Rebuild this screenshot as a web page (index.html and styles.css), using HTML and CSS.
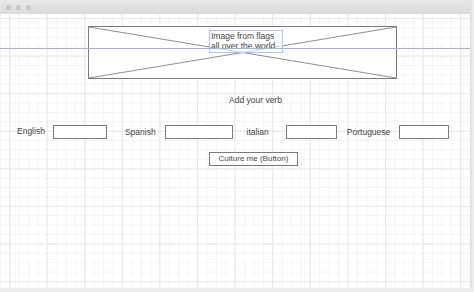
FILE: index.html
```html
<!DOCTYPE html>
<html lang="en">

<head>
    <meta charset="UTF-8">
    <title>Culture me - wireframe</title>
    <link rel="stylesheet" href="styles.css">
</head>

<body>

    <div class="frame">
        <div class="titlebar">
            <span class="dot"></span>
            <span class="dot"></span>
            <span class="dot"></span>
        </div>

        <div class="canvas">
            <div class="placeholder">
                <svg class="cross" viewBox="0 0 309 53" preserveAspectRatio="none">
                    <line x1="0" y1="0" x2="309" y2="53" />
                    <line x1="309" y1="0" x2="0" y2="53" />
                </svg>
                <div class="caption">Image from flags<br>all over the world</div>
            </div>

            <!-- selection guide from the mockup tool, lies over the image box -->
            <div class="guide"></div>

            <p class="heading">Add your verb</p>

            <div class="verbs">
                <label class="lang lang-en">English</label>
                <span class="field field-en"></span>
                <label class="lang lang-es">Spanish</label>
                <span class="field field-es"></span>
                <label class="lang lang-it">italian</label>
                <span class="field field-it"></span>
                <label class="lang lang-pt">Portuguese</label>
                <span class="field field-pt"></span>
            </div>

            <div class="actions">
                <button class="btn">Culture me (Button)</button>
            </div>
        </div>
    </div>

</body>

</html>
```

FILE: styles.css
```css
body {
    margin: 0;
    background-color: #ececec;
    font-family: "Liberation Sans", Arial, sans-serif;
    font-size: 8.5px;
    color: #444;
}

.frame {
    width: 470px;
    height: 288px;
    background-color: #fff;
    box-shadow: 0 0 3px rgba(0, 0, 0, 0.15);
    display: flex;
    flex-direction: column;
}

.titlebar {
    height: 14px;
    background: linear-gradient(#e9e9e9, #dadada);
    display: flex;
    align-items: center;
    gap: 5px;
    padding-left: 6px;
}

.dot {
    width: 5px;
    height: 5px;
    border-radius: 50%;
    background-color: #c6c6c6;
}

.canvas {
    position: relative;
    flex: 1;
    padding-top: 12px;
    background-color: #fff;
    background-image:
        linear-gradient(90deg, #e8e8e8 1px, transparent 1px),
        linear-gradient(#e8e8e8 1px, transparent 1px),
        linear-gradient(90deg, #f3f3f3 1px, transparent 1px),
        linear-gradient(#f3f3f3 1px, transparent 1px);
    background-size: 37.6px 37.6px, 37.6px 37.6px, 9.4px 9.4px, 9.4px 9.4px;
    background-position: 9px 4px, 9px 4px, 0 4px, 0 4px;
}

.guide {
    position: absolute;
    left: 0;
    right: 0;
    top: 34px;
    height: 1px;
    background-color: #a3ade6;
}

.placeholder {
    position: relative;
    margin-left: 88px;
    width: 307px;
    height: 51px;
    border: 1px solid #7a7a7a;
    background-color: #fff;
}

.cross {
    position: absolute;
    left: 0;
    top: 0;
    width: 100%;
    height: 100%;
}

.cross line {
    stroke: #8a8a8a;
    stroke-width: 1;
}

.caption {
    position: absolute;
    left: 120px;
    top: 3px;
    width: 71px;
    line-height: 10px;
    border: 1px solid #b3c1ee;
    padding: 0 0 1px 1px;
    background-color: rgba(255, 255, 255, 0.6);
}

.heading {
    margin: 15px 0 0 229px;
    line-height: 12px;
}

.verbs {
    display: flex;
    align-items: center;
    margin-top: 19px;
    height: 14px;
}

.lang {
    line-height: 12px;
}

.lang-en {
    margin-left: 17px;
    margin-top: -2px;
}

.field {
    height: 12px;
    border: 1px solid #7a7a7a;
    background-color: #fff;
}

.field-en {
    margin-left: 8px;
    width: 52px;
}

.lang-es {
    margin-left: 18px;
}

.field-es {
    margin-left: 9px;
    width: 66px;
}

.lang-it {
    margin-left: 14px;
}

.field-it {
    margin-left: 17px;
    width: 49px;
}

.lang-pt {
    margin-left: 10px;
}

.field-pt {
    margin-left: 9px;
    width: 48px;
}

.actions {
    margin-top: 13px;
    padding-left: 209px;
}

.btn {
    width: 89px;
    height: 14px;
    padding: 0;
    border: 1px solid #7a7a7a;
    border-radius: 0;
    background-color: #fff;
    font-family: "Liberation Sans", Arial, sans-serif;
    font-size: 8px;
    color: #444;
    line-height: 12px;
}
```
